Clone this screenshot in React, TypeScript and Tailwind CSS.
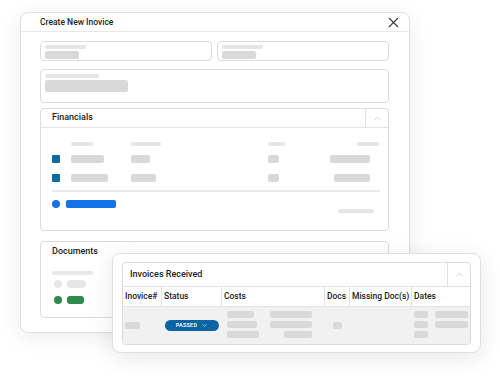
import { X, ChevronUp, ChevronDown } from 'lucide-react';

function Bar({ w, h = 7, className = 'bg-[#d9d9d9]' }: { w: number; h?: number; className?: string }) {
  return <div className={`rounded-[2px] shrink-0 ${className}`} style={{ width: w, height: h }} />;
}

function Pill({ w }: { w: number }) {
  return <div className="h-[4px] rounded-full bg-[#e6e6e6] shrink-0" style={{ width: w }} />;
}

function CardHeader({ title, height = 19, pad = 11 }: { title: string; height?: number; pad?: number }) {
  return (
    <div className="flex items-stretch border-b border-[#e2e2e2]" style={{ height }}>
      <div className="flex-1 flex items-center text-[9px] font-medium text-[#222]" style={{ paddingLeft: pad }}>{title}</div>
      <div className="w-[23px] border-l border-[#e2e2e2] flex items-center justify-center">
        <ChevronUp className="w-[11px] h-[11px] text-[#bdbdbd]" strokeWidth={1.5} />
      </div>
    </div>
  );
}

export default function App() {
  const cols = [
    { name: 'Inovice#', w: 39 },
    { name: 'Status', w: 60 },
    { name: 'Costs', w: 103 },
    { name: 'Docs', w: 25 },
    { name: 'Missing Doc(s)', w: 62 },
    { name: 'Dates', w: 0 },
  ];

  return (
    <div className="relative w-[500px] h-[378px] bg-white overflow-hidden font-['Roboto','Liberation_Sans',sans-serif]">
      {/* Create invoice modal */}
      <div className="ml-[20px] mt-[12px] w-[390px] h-[321px] rounded-[8px] border border-[#e0e0e0] bg-white shadow-[0_4px_22px_rgba(0,0,0,0.08)] flex flex-col">
        <div className="h-[19px] border-b border-[#e8e8e8] flex items-center justify-between pl-[19px] pr-[7px]">
          <span className="text-[8.5px] font-medium text-[#222] leading-none">Create New Inovice</span>
          <X className="w-[17px] h-[17px] text-[#3a3a3a]" strokeWidth={1.6} />
        </div>

        <div className="flex flex-col pl-[19px] pr-[20px] pt-[9px]">
          <div className="flex gap-[5px]">
            {[0, 1].map((i) => (
              <div key={i} className="w-[172px] h-[20px] rounded-[4px] border border-[#dcdcdc] pl-[4px] pt-[3px] flex flex-col gap-[2px]">
                <Pill w={41} />
                <Bar w={34} h={8} />
              </div>
            ))}
          </div>

          <div className="mt-[8px] h-[34px] rounded-[4px] border border-[#dcdcdc] pl-[4px] pt-[4px] flex flex-col gap-[2px]">
            <Pill w={54} />
            <Bar w={83} h={12} />
          </div>

          {/* Financials */}
          <div className="mt-[5px] h-[123px] rounded-[4px] border border-[#dcdcdc] flex flex-col">
            <CardHeader title="Financials" />
            <div className="flex flex-col pl-[11px] pr-[7px] pt-[14px]">
              <div className="flex items-center h-[4px]">
                <div className="w-[19px]" />
                <div className="w-[60px]"><Pill w={22} /></div>
                <div className="w-[137px]"><Pill w={30} /></div>
                <div className="flex-1"><Pill w={17} /></div>
                <div className="pr-[2px]"><Pill w={22} /></div>
              </div>
              <div className="flex items-center h-[8px] mt-[9px]">
                <div className="w-[19px]"><div className="w-[8px] h-[8px] rounded-[1px] bg-[#0e6aa3]" /></div>
                <div className="w-[60px]"><Bar w={33} h={8} /></div>
                <div className="w-[137px]"><Bar w={19} h={8} /></div>
                <div className="flex-1"><Bar w={11} h={8} /></div>
                <div className="pr-[11px]"><Bar w={40} h={8} /></div>
              </div>
              <div className="flex items-center h-[8px] mt-[11px]">
                <div className="w-[19px]"><div className="w-[8px] h-[8px] rounded-[1px] bg-[#0e6aa3]" /></div>
                <div className="w-[60px]"><Bar w={37} h={8} /></div>
                <div className="w-[137px]"><Bar w={25} h={8} /></div>
                <div className="flex-1"><Bar w={11} h={8} /></div>
                <div className="pr-[11px]"><Bar w={36} h={8} /></div>
              </div>
              <div className="mt-[8px] h-[2px] bg-[#e8e8e8] mr-[1px]" />
              <div className="flex items-center mt-[8px] h-[8px] gap-[6px]">
                <div className="w-[8px] h-[8px] rounded-full bg-[#1473e6]" />
                <Bar w={50} h={8} className="bg-[#1473e6]" />
              </div>
              <div className="flex justify-end pr-[7px] mt-[1px]">
                <Pill w={36} />
              </div>
            </div>
          </div>

          {/* Documents */}
          <div className="mt-[10px] h-[77px] rounded-[4px] border border-[#dcdcdc] flex flex-col pl-[11px] pt-[4px]">
            <span className="text-[9px] font-medium text-[#222] leading-[10px]">Documents</span>
            <div className="mt-[15px] w-[41px] h-[4px] rounded-full bg-[#e8e8e8]" />
            <div className="mt-[5px] flex items-center gap-[5px] pl-[2px]">
              <div className="w-[8px] h-[8px] rounded-full bg-[#e6e6e6]" />
              <div className="w-[19px] h-[8px] rounded-full bg-[#e6e6e6]" />
            </div>
            <div className="mt-[8px] flex items-center gap-[5px] pl-[2px]">
              <div className="w-[8px] h-[8px] rounded-full bg-[#2f8a4c]" />
              <div className="w-[17px] h-[8px] rounded-[3px] bg-[#2f8a4c]" />
            </div>
          </div>
        </div>
      </div>

      {/* Invoices received overlay */}
      <div className="absolute left-[112px] top-[253px] w-[369px] h-[100px] rounded-[8px] border border-[#e0e0e0] bg-white shadow-[0_4px_22px_rgba(0,0,0,0.1)] pl-[9px] pt-[8px]">
        <div className="w-[349px] h-[83px] rounded-[4px] border border-[#dcdcdc] flex flex-col overflow-hidden">
          <CardHeader title="Invoices Received" height={24} pad={7} />
          <div className="flex h-[20px] border-b border-[#e2e2e2]">
            {cols.map((c, i) => (
              <div
                key={c.name}
                className={`flex items-center pl-[2px] text-[8.5px] font-medium text-[#222] whitespace-nowrap ${i < cols.length - 1 ? 'border-r border-[#e2e2e2]' : 'flex-1'}`}
                style={c.w ? { width: c.w } : undefined}
              >
                {c.name}
              </div>
            ))}
          </div>
          <div className="flex-1 bg-[#f1f1f1] flex">
            <div className="w-[39px] flex items-center pl-[2px]">
              <Bar w={15} />
            </div>
            <div className="w-[60px] flex items-center justify-center">
              <div className="w-[54px] h-[11px] rounded-full bg-[#0b64a5] flex items-center justify-center gap-[4px]">
                <span className="text-[5.5px] font-semibold text-white tracking-[0.2px] leading-none">PASSED</span>
                <ChevronDown className="w-[7px] h-[7px] text-white" strokeWidth={2} />
              </div>
            </div>
            <div className="w-[103px] flex gap-[11px] pl-[5px] pt-[4px]">
              <div className="flex flex-col gap-[3px]">
                <Bar w={27} />
                <Bar w={30} />
                <Bar w={32} />
              </div>
              <div className="flex flex-col gap-[3px] items-end">
                <Bar w={42} />
                <Bar w={42} />
                <Bar w={28} />
              </div>
            </div>
            <div className="w-[25px] flex items-center justify-center">
              <Bar w={9} />
            </div>
            <div className="w-[62px]" />
            <div className="flex-1 flex gap-[7px] pl-[2px] pt-[4px]">
              <div className="flex flex-col gap-[3px]">
                <Bar w={14} />
                <Bar w={14} />
                <Bar w={14} />
              </div>
              <div className="flex flex-col gap-[3px]">
                <Bar w={33} />
                <Bar w={33} />
              </div>
            </div>
          </div>
        </div>
      </div>
    </div>
  );
}
